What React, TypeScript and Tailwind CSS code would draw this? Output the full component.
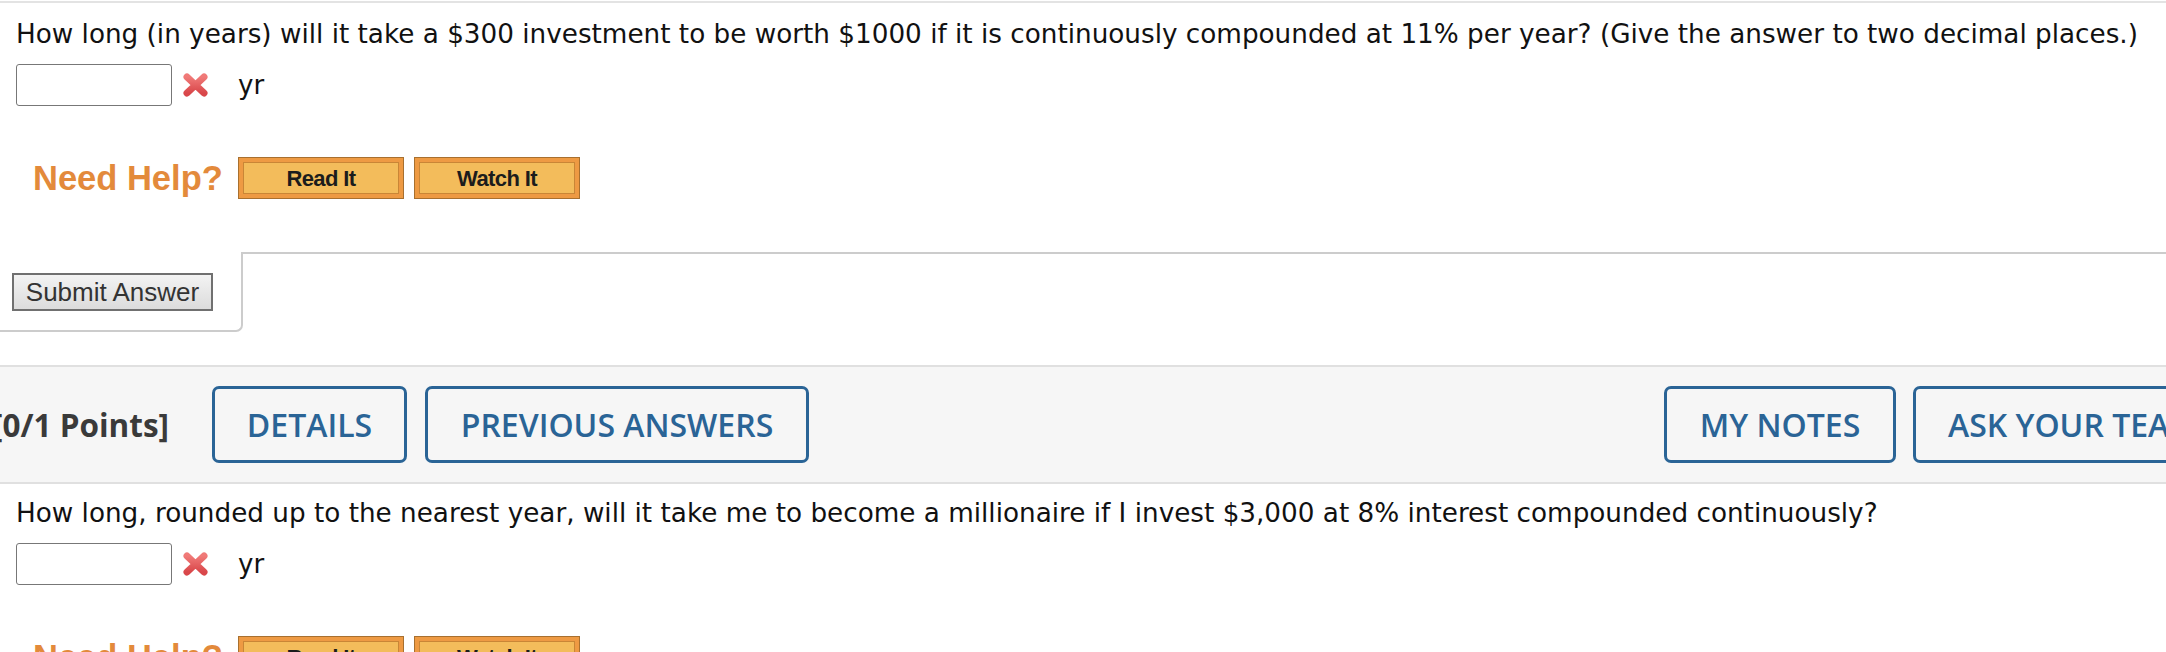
import React from 'react';

const RedX = () => (
  <svg width="27" height="24" viewBox="0 0 27 24" className="shrink-0">
    <defs>
      <linearGradient id="xg" x1="0" y1="0" x2="0" y2="1">
        <stop offset="0" stopColor="#f07a78" />
        <stop offset="1" stopColor="#d9474a" />
      </linearGradient>
    </defs>
    <path d="M5 4 L22 20 M22 4 L5 20" stroke="url(#xg)" strokeWidth="7" strokeLinecap="round" />
  </svg>
);

const HelpButton = ({ label }: { label: string }) => (
  <div className="w-[166px] h-[42px] border border-[#a8702f] bg-[#ee9a43] p-[4px] flex">
    <div className="flex-1 border border-[#c98636] bg-[#f3bc5b] flex items-center justify-center">
      <span className="font-['Liberation_Sans'] font-bold text-[22px] text-[#1c1c1c] tracking-[-0.6px]">{label}</span>
    </div>
  </div>
);

const Question = ({ text, pt }: { text: string; pt: string }) => (
  <div>
    <div className={`pl-[16px] ${pt}`}>
      <p className="font-['DejaVu_Sans',sans-serif] text-[26.25px] leading-[30px] text-[#111] whitespace-nowrap">{text}</p>
      <div className="mt-[15px] h-[42px] flex items-center">
        <div className="w-[156px] h-[42px] border-[1.5px] border-[#777] rounded-[3px] bg-white shrink-0" />
        <div className="ml-[10px]">
          <RedX />
        </div>
        <span className="ml-[29px] font-['DejaVu_Sans',sans-serif] text-[26px] text-[#111]">yr</span>
      </div>
    </div>
    <div className="mt-[51px] pl-[33px] flex items-center">
      <span className="w-[205px] font-['Liberation_Sans',sans-serif] font-bold text-[34.5px] leading-[42px] text-[#e38a3b]">Need Help?</span>
      <HelpButton label="Read It" />
      <div className="ml-[10px]">
        <HelpButton label="Watch It" />
      </div>
    </div>
  </div>
);

const BandButton = ({ label, w }: { label: string; w: string }) => (
  <div className={`${w} h-[77px] shrink-0 border-[3px] border-[#2a6496] rounded-[7px] flex items-center justify-center`}>
    <span className="font-['Open_Sans',sans-serif] font-semibold text-[32px] text-[#2a6496] whitespace-nowrap">{label}</span>
  </div>
);

export default function App() {
  return (
    <div className="w-[2166px] h-[652px] overflow-hidden bg-white">
      <div className="mt-[1px] h-[2px] bg-[#e3e3e3]" />
      <Question
        pt="pt-[16px]"
        text="How long (in years) will it take a $300 investment to be worth $1000 if it is continuously compounded at 11% per year? (Give the answer to two decimal places.)"
      />

      <div className="mt-[53px] flex">
        <div className="w-[243px] h-[80px] shrink-0 border-b-2 border-r-2 border-[#cccccc] rounded-br-[7px] pl-[12px] pt-[21px]">
          <button className="w-[201px] h-[38px] border-2 border-[#707070] bg-gradient-to-b from-[#f3f3f3] to-[#dcdcdc] font-['Liberation_Sans',sans-serif] text-[26px] leading-[32px] text-[#333]">
            Submit Answer
          </button>
        </div>
        <div className="flex-1 border-t-2 border-[#cccccc]" />
      </div>

      <div className="mt-[33px] h-[119px] border-y-2 border-[#e0e0e0] bg-[#f6f6f6] flex items-center">
        <div className="w-[220px] -ml-[8px] shrink-0">
          <span className="font-['Open_Sans',sans-serif] font-bold text-[31.5px] text-[#3a3a3a] whitespace-nowrap">[0/1 Points]</span>
        </div>
        <BandButton label="DETAILS" w="w-[195px]" />
        <div className="ml-[18px]">
          <BandButton label="PREVIOUS ANSWERS" w="w-[384px]" />
        </div>
        <div className="ml-[855px]">
          <BandButton label="MY NOTES" w="w-[232px]" />
        </div>
        <div className="ml-[17px]">
          <div className="h-[77px] shrink-0 border-[3px] border-[#2a6496] rounded-[7px] flex items-center px-[32px]">
            <span className="font-['Open_Sans',sans-serif] font-semibold text-[32px] text-[#2a6496] whitespace-nowrap">ASK YOUR TEACHER</span>
          </div>
        </div>
      </div>

      <Question
        pt="pt-[14px]"
        text="How long, rounded up to the nearest year, will it take me to become a millionaire if I invest $3,000 at 8% interest compounded continuously?"
      />
    </div>
  );
}
